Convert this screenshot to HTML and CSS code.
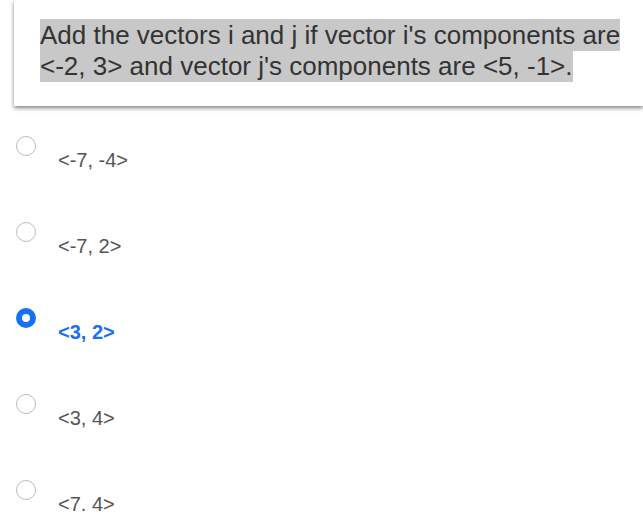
FILE: index.html
```html
<!DOCTYPE html>
<html>
<head>
<meta charset="utf-8">
<link rel="stylesheet" href="styles.css">
</head>
<body>
<div class="card">
  <p class="question"><span class="hl">Add the vectors i and j if vector i's components are <br>&lt;-2, 3&gt; and vector j's components are &lt;5, -1&gt;.</span></p>
</div>
<ul class="options">
  <li class="option"><span class="radio"></span><span class="label">&lt;-7, -4&gt;</span></li>
  <li class="option"><span class="radio"></span><span class="label">&lt;-7, 2&gt;</span></li>
  <li class="option selected"><span class="radio"></span><span class="label">&lt;3, 2&gt;</span></li>
  <li class="option"><span class="radio"></span><span class="label">&lt;3, 4&gt;</span></li>
  <li class="option"><span class="radio"></span><span class="label">&lt;7. 4&gt;</span></li>
</ul>
</body>
</html>
```
FILE: styles.css
```css
html, body {
  margin: 0;
  padding: 0;
  background: #fff;
  overflow: hidden;
}
body {
  font-family: "Liberation Sans", Arial, sans-serif;
  width: 643px;
  height: 517px;
}
.card {
  margin-left: 14px;
  background: #fff;
  padding: 20px 0 24px 26px;
  box-shadow: 0 2px 4px rgba(0, 0, 0, 0.5);
}
.question {
  margin: 0;
  font-size: 26px;
  line-height: 31px;
  color: #333;
}
.hl {
  background: #c8c8c8;
  padding: 1px 0;
}
.options {
  list-style: none;
  margin: 30px 0 0 0;
  padding: 0;
}
.option {
  display: flex;
  align-items: flex-start;
  height: 86px;
}
.option:last-child {
  height: auto;
}
.radio {
  box-sizing: border-box;
  width: 20px;
  height: 20px;
  margin-left: 16px;
  border: 1px solid #bdbdbd;
  border-radius: 50%;
  flex: none;
}
.label {
  margin-left: 22px;
  margin-top: 13px;
  font-size: 20px;
  line-height: 22px;
  color: #555;
}
.selected .radio {
  border: 6px solid #1570f5;
}
.selected .label {
  color: #1570f5;
  font-weight: bold;
}
```
